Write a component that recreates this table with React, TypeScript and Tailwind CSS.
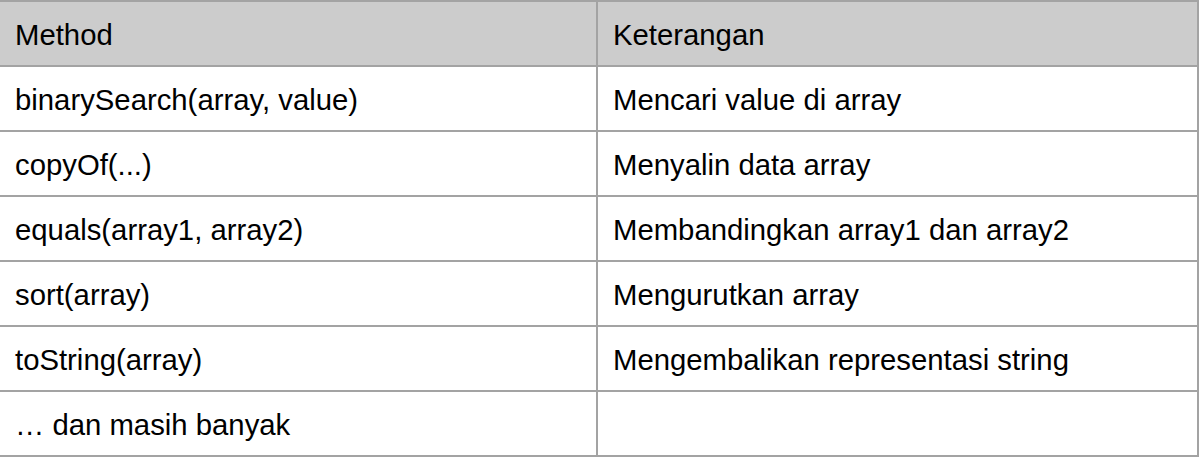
const rows: [string, string][] = [
  ["binarySearch(array, value)", "Mencari value di array"],
  ["copyOf(...)", "Menyalin data array"],
  ["equals(array1, array2)", "Membandingkan array1 dan array2"],
  ["sort(array)", "Mengurutkan array"],
  ["toString(array)", "Mengembalikan representasi string"],
  ["… dan masih banyak", ""],
]

export default function App() {
  return (
    <div className="w-[1200px] h-[458px] bg-white overflow-hidden font-['Liberation_Sans',Arial,sans-serif] text-[29.3px] text-black">
      <div className="w-[1199px] border-t-2 border-r-2 border-[#a3a3a3]">
        <div className="grid grid-cols-[598px_1fr] h-[65px] border-b-2 border-[#a3a3a3] bg-[#cccccc]">
          <div className="flex items-center pl-[15px] pt-[3px] border-r-2 border-[#a3a3a3]">Method</div>
          <div className="flex items-center pl-[15px] pt-[3px]">Keterangan</div>
        </div>
        {rows.map(([method, desc]) => (
          <div key={method} className="grid grid-cols-[598px_1fr] h-[65px] border-b-2 border-[#a3a3a3]">
            <div className="flex items-center pl-[15px] pt-[3px] border-r-2 border-[#a3a3a3]">{method}</div>
            <div className="flex items-center pl-[15px] pt-[3px]">{desc}</div>
          </div>
        ))}
      </div>
    </div>
  )
}
